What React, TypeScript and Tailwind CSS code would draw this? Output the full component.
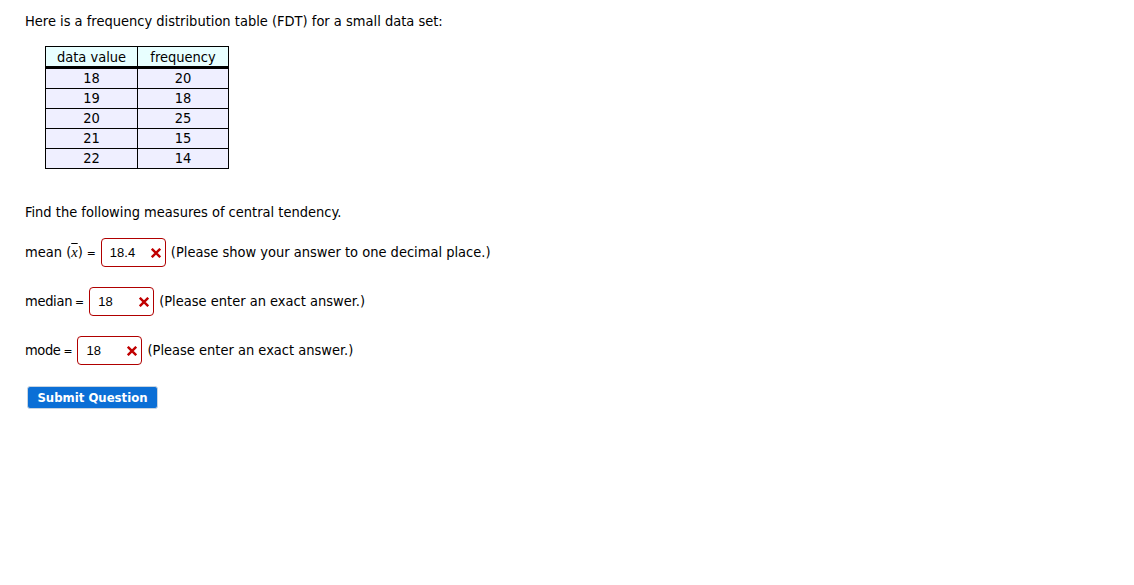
import React from "react";

const base = { fontFamily: '"DejaVu Sans Condensed", "DejaVu Sans", sans-serif' };

function RedX() {
  return (
    <svg width="10" height="10" viewBox="0 0 10 10" className="shrink-0">
      <path d="M0.8 0.8 L9.2 9.2 M9.2 0.8 L0.8 9.2" stroke="#c00000" strokeWidth="2.4" />
    </svg>
  );
}

function AnswerBox({ value }: { value: string }) {
  return (
    <span className="mx-[5px] inline-flex h-[29px] w-[65px] items-center justify-between rounded-[4px] border border-[#b00000] bg-white pl-[8px] pr-[4px]">
      <span className="text-[13px] text-black" style={{ fontFamily: '"Liberation Sans", Arial, sans-serif' }}>
        {value}
      </span>
      <RedX />
    </span>
  );
}

const rows = [
  [18, 20],
  [19, 18],
  [20, 25],
  [21, 15],
  [22, 14],
];

export default function App() {
  return (
    <div className="min-h-[585px] bg-white pl-[25px] pt-[12px] text-[14.5px] text-black" style={base}>
      <p className="leading-[18px]">Here is a frequency distribution table (FDT) for a small data set:</p>

      <table className="ml-[20px] mt-[16px] border-collapse border border-black text-[14.5px]">
        <thead>
          <tr className="bg-[#e8ffff]">
            <th className="w-[92px] border border-b-[3px] border-black px-1 pt-px font-normal leading-[18px]">data value</th>
            <th className="w-[91px] border border-b-[3px] border-black px-1 pt-px font-normal leading-[18px]">frequency</th>
          </tr>
        </thead>
        <tbody>
          {rows.map(([v, f]) => (
            <tr key={v} className="bg-[#efefff]">
              <td className="border border-black text-center leading-[19px]">{v}</td>
              <td className="border border-black text-center leading-[19px]">{f}</td>
            </tr>
          ))}
        </tbody>
      </table>

      <p className="mt-[34px] leading-[18px]">Find the following measures of central tendency.</p>

      <div className="mt-[17px] flex items-center">
        <span>
          mean (<span className="italic overline" style={{ fontFamily: '"Liberation Serif", serif' }}>x</span>)
        </span>
        <span className="ml-[4px] text-[12px]">=</span>
        <AnswerBox value="18.4" />
        <span>(Please show your answer to one decimal place.)</span>
      </div>

      <div className="mt-[20px] flex items-center">
        <span className="tracking-[-0.3px]">median</span>
        <span className="ml-[3px] text-[12px]">=</span>
        <AnswerBox value="18" />
        <span>(Please enter an exact answer.)</span>
      </div>

      <div className="mt-[20px] flex items-center">
        <span className="tracking-[-0.4px]">mode</span>
        <span className="ml-[3px] text-[12px]">=</span>
        <AnswerBox value="18" />
        <span>(Please enter an exact answer.)</span>
      </div>

      <button className="mt-[21px] ml-[2px] h-[23px] w-[131px] rounded-[3px] border border-[#c8d4e0] bg-[#0b6fd6] text-[13px] font-bold text-white">
        Submit Question
      </button>
    </div>
  );
}
